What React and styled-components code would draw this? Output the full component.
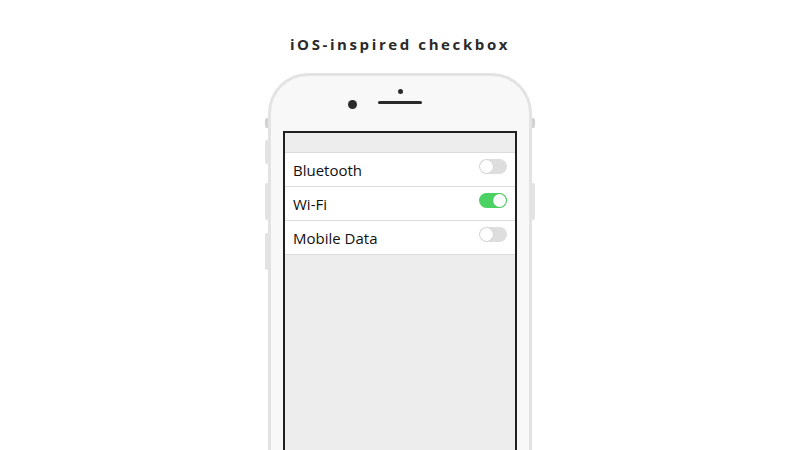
import React, { useState } from 'react'
import styled, { createGlobalStyle } from 'styled-components'

const GlobalStyle = createGlobalStyle`
  html, body {
    margin: 0;
    padding: 0;
    background: #fff;
    font-family: "Open Sans", "Liberation Sans", sans-serif;
  }
`

const Page = styled.div`
  height: 450px;
  overflow: hidden;
  display: flex;
  flex-direction: column;
  align-items: center;
`

const Title = styled.h1`
  margin: 34px 0 0;
  font-size: 15px;
  font-weight: 700;
  letter-spacing: 2.6px;
  color: #2a2a2a;
  line-height: 20px;
`

const Phone = styled.div`
  position: relative;
  margin-top: 19px;
  width: 258px;
  height: 420px;
  flex-shrink: 0;
  border: 3px solid #e3e3e3;
  border-bottom: none;
  border-radius: 40px 40px 0 0;
  background: #f8f8f8;
`

// hardware keys sticking out of the frame edges
const SideKey = styled.span`
  position: absolute;
  top: ${p => p.top}px;
  height: ${p => p.h}px;
  width: 3px;
  background: ${p => (p.dark ? '#d2d2d2' : '#e3e3e3')};
  ${p => (p.right ? 'right: -6px;' : 'left: -6px;')}
  border-radius: ${p => (p.right ? '0 2px 2px 0' : '2px 0 0 2px')};
`

const Bezel = styled.div`
  height: 55px;
  display: grid;
  grid-template-columns: 1fr auto 1fr;
  align-items: start;
`

const Camera = styled.span`
  justify-self: end;
  margin: 24px 21px 0 0;
  width: 9px;
  height: 9px;
  border-radius: 50%;
  background: #2b2b2b;
`

const Earpiece = styled.div`
  display: flex;
  flex-direction: column;
  align-items: center;
  padding-top: 13px;
  gap: 7px;
`

const Sensor = styled.span`
  width: 5px;
  height: 5px;
  border-radius: 50%;
  background: #2b2b2b;
`

const Speaker = styled.span`
  width: 44px;
  height: 3px;
  border-radius: 2px;
  background: #2b2b2b;
`

const Screen = styled.div`
  margin: 0 12px;
  height: 400px;
  border: 2px solid #1f1f1f;
  border-bottom: none;
  background: #ededed;
  padding-top: 19px;
`

const List = styled.ul`
  list-style: none;
  margin: 0;
  padding: 0;
  background: #fff;
  border-top: 1px solid #dcdcdc;
`

const Row = styled.li`
  display: flex;
  align-items: center;
  justify-content: space-between;
  height: 33px;
  padding: 0 8px 0 8px;
  border-bottom: 1px solid #dcdcdc;
`

const Label = styled.span`
  font-size: 15px;
  color: #111;
  padding-top: 1px;
`

const Track = styled.button`
  position: relative;
  width: 28px;
  height: 15px;
  padding: 0;
  margin-bottom: 6px;
  border: none;
  border-radius: 8px;
  background: ${p => (p.on ? '#4cd263' : '#dedede')};
  cursor: pointer;
`

const Knob = styled.span`
  position: absolute;
  top: 1px;
  left: ${p => (p.on ? '14px' : '1px')};
  width: 13px;
  height: 13px;
  box-sizing: border-box;
  border-radius: 50%;
  background: #fff;
  box-shadow: 0 0 0 0.5px ${p => (p.on ? '#3fbf55' : '#cfcfcf')};
`

const settings = [
  { name: 'Bluetooth', on: false },
  { name: 'Wi-Fi', on: true },
  { name: 'Mobile Data', on: false },
]

export default function App() {
  const [state, setState] = useState(settings)

  const flip = i =>
    setState(s => s.map((item, j) => (j === i ? { ...item, on: !item.on } : item)))

  return (
    <Page>
      <GlobalStyle />
      <Title>iOS-inspired checkbox</Title>
      <Phone>
        <SideKey top={42} h={10} dark />
        <SideKey top={64} h={24} />
        <SideKey top={107} h={37} />
        <SideKey top={157} h={37} />
        <SideKey right top={42} h={10} dark />
        <SideKey right top={107} h={37} />
        <Bezel>
          <Camera />
          <Earpiece>
            <Sensor />
            <Speaker />
          </Earpiece>
          <span />
        </Bezel>
        <Screen>
          <List>
            {state.map((item, i) => (
              <Row key={item.name}>
                <Label>{item.name}</Label>
                <Track on={item.on ? 1 : 0} onClick={() => flip(i)}>
                  <Knob on={item.on ? 1 : 0} />
                </Track>
              </Row>
            ))}
          </List>
        </Screen>
      </Phone>
    </Page>
  )
}
